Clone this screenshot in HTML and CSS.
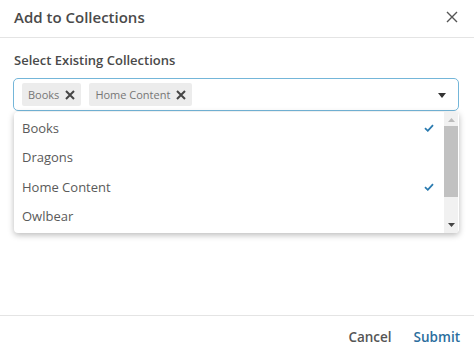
FILE: index.html
```html
<!DOCTYPE html>
<html>
<head>
<meta charset="utf-8">
<link rel="stylesheet" href="styles.css">
</head>
<body>
<div class="modal">
  <div class="header">
    <div class="title">Add to Collections</div>
    <svg class="close" width="12" height="12" viewBox="0 0 12 12"><path d="M1 1L11 11M11 1L1 11" stroke="#555" stroke-width="1.4" fill="none"/></svg>
  </div>
  <div class="body">
    <div class="label">Select Existing Collections</div>
    <div class="select">
      <div class="chips">
        <span class="chip">Books <svg class="chip-x" width="10" height="10" viewBox="0 0 10 10"><path d="M1 1L9 9M9 1L1 9" stroke="#444" stroke-width="2" fill="none"/></svg></span>
        <span class="chip">Home Content <svg class="chip-x" width="10" height="10" viewBox="0 0 10 10"><path d="M1 1L9 9M9 1L1 9" stroke="#444" stroke-width="2" fill="none"/></svg></span>
      </div>
      <svg class="caret" width="8" height="5" viewBox="0 0 8 5"><path d="M0 0H8L4 5Z" fill="#333"/></svg>
    </div>
    <div class="menu-wrap">
      <div class="menu">
        <div class="options">
          <div class="option"><span>Books</span><svg class="check" width="10" height="8" viewBox="0 0 10 8"><path d="M1 4.2L3.8 6.8L9 1.2" stroke="#2b7bb0" stroke-width="1.8" fill="none"/></svg></div>
          <div class="option"><span>Dragons</span></div>
          <div class="option"><span>Home Content</span><svg class="check" width="10" height="8" viewBox="0 0 10 8"><path d="M1 4.2L3.8 6.8L9 1.2" stroke="#2b7bb0" stroke-width="1.8" fill="none"/></svg></div>
          <div class="option"><span>Owlbear</span></div>
        </div>
        <div class="scrollbar">
          <svg class="arrow" width="7" height="4" viewBox="0 0 7 4"><path d="M0 4H7L3.5 0Z" fill="#bbb"/></svg>
          <div class="track"><div class="thumb"></div></div>
          <svg class="arrow" width="7" height="4" viewBox="0 0 7 4"><path d="M0 0H7L3.5 4Z" fill="#444"/></svg>
        </div>
      </div>
    </div>
  </div>
  <div class="footer">
    <button class="btn cancel">Cancel</button>
    <button class="btn submit">Submit</button>
  </div>
</div>
</body>
</html>
```

FILE: styles.css
```css
* { box-sizing: border-box; }
html, body { margin: 0; padding: 0; background: #fff; }
body { font-family: "Open Sans", "Noto Sans", sans-serif; color: #444; }
.modal { width: 474px; height: 353px; display: flex; flex-direction: column; }
.header {
  height: 38px;
  border-bottom: 1px solid #e4e4e4;
  display: flex; align-items: center; justify-content: space-between;
  padding: 0 16px 3px 14px;
}
.title { font-size: 15px; font-weight: 600; color: #4a4a4a; }
.close { display: block; }
.body { flex: 1; padding: 12px 15px 0 14px; }
.label { font-size: 13px; font-weight: 600; color: #4a4a4a; height: 28px; line-height: 20px; }
.select {
  height: 33px;
  border: 1px solid #74b6d9;
  border-radius: 5px;
  display: flex; align-items: center; justify-content: space-between;
  padding: 0 12px 0 8px;
  margin-left: -1px;
}
.chips { display: flex; gap: 8px; }
.chip {
  background: #ececec;
  height: 23px;
  border-radius: 2px;
  padding: 0 6px 0 6px;
  display: flex; align-items: center; gap: 6px;
  font-size: 11px; color: #767676;
}
.chip-x { display: block; }
.caret { display: block; margin-top: 2px; }
.menu-wrap { position: relative; height: 0; }
.menu {
  position: absolute; left: 0; right: 0; top: 1px;
  height: 121px;
  background: #fff;
  border-radius: 4px;
  box-shadow: 0 2px 6px rgba(0,0,0,0.28);
  display: flex;
  overflow: hidden;
}
.options { flex: 1; padding-top: 1px; }
.option {
  height: 29.5px;
  display: flex; align-items: center; justify-content: space-between;
  padding: 0 10px 0 8px;
  font-size: 13px; color: #5a5a5a;
}
.check { display: block; }
.scrollbar {
  width: 14px; margin-right: 1px;
  background: #f1f1f1;
  display: flex; flex-direction: column; align-items: center;
  padding: 6px 0 6px;
}
.arrow { display: block; }
.track { flex: 1; width: 100%; padding: 4px 0; }
.thumb { width: 100%; height: 71px; background: #c1c1c1; }
.footer {
  height: 38px;
  border-top: 1px solid #e4e4e4;
  display: flex; align-items: center; justify-content: flex-end;
  gap: 22px;
  padding: 4px 14px 0 0;
}
.btn {
  border: none; background: none; padding: 0;
  font-family: inherit; font-size: 13.5px; font-weight: 600;
}
.cancel { color: #555; }
.submit { color: #2a6e9e; }
```
